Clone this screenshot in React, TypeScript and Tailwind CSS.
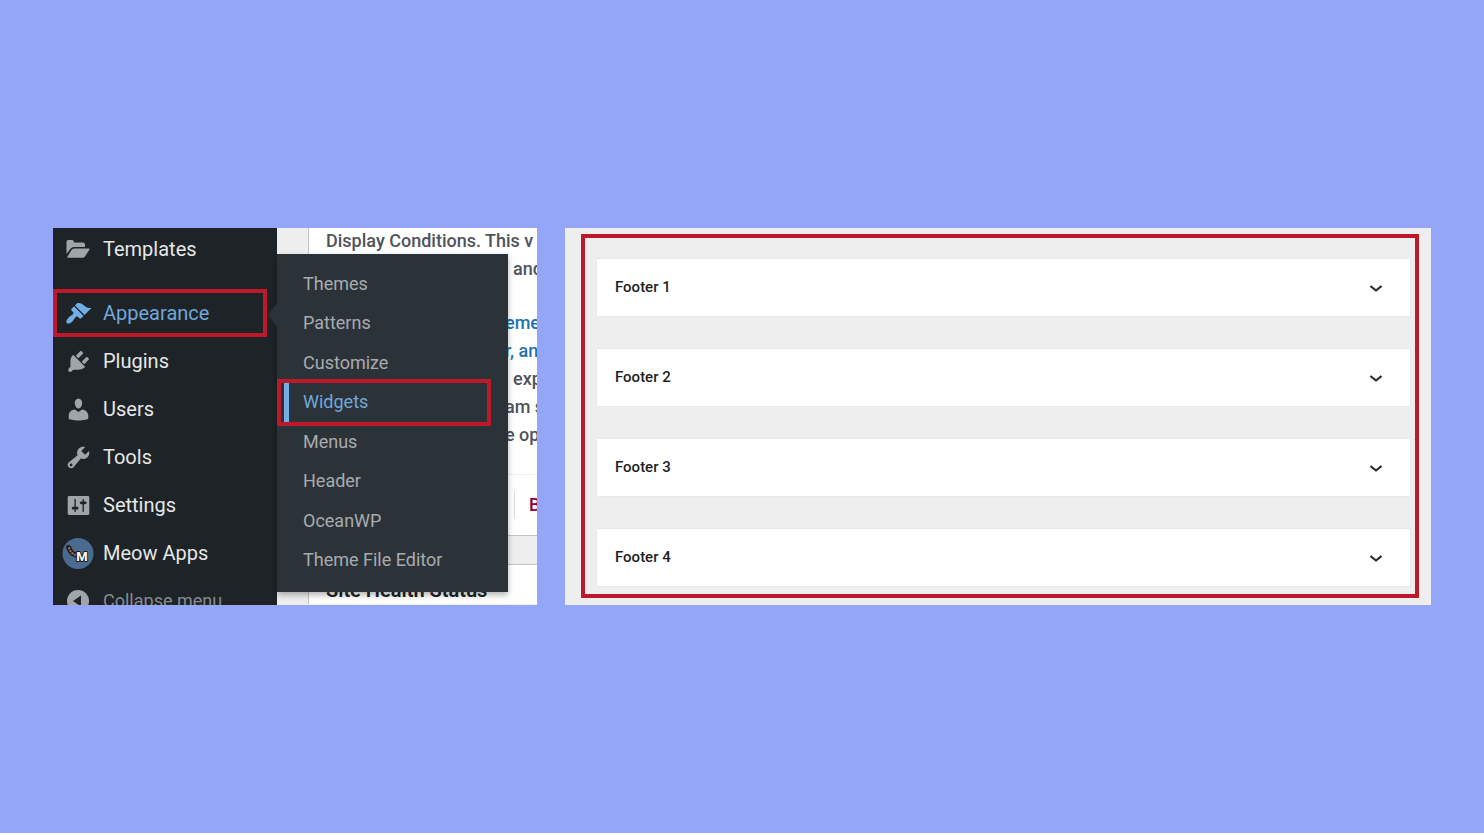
import { clsx } from "clsx";

function DashIcon({ d }: { d: string }) {
  return (
    <svg viewBox="0 0 20 20" className="h-[27px] w-[27px]" fill="currentColor" fillRule="evenodd" aria-hidden="true">
      <path d={d} />
    </svg>
  );
}

function FolderIcon() {
  return (
    <svg viewBox="0 0 24 20" className="h-5 w-6" fill="currentColor" aria-hidden="true">
      <path d="M.5 15V3Q.5 1 2.500 1H6Q8 1 8 3v.5h9q2 0 2 2V8H8Q5.800 8 4.500 9.700z" />
      <path d="M8.300 9.500H23q1 0 .5 1l-4.300 6.700q-1 1.600-3 1.600H2q-1.200 0-.6-1.100l4-6.500q1-1.700 2.900-1.700z" />
    </svg>
  );
}

function MeowIcon() {
  return (
    <svg viewBox="0 0 32 32" className="h-8 w-8" aria-hidden="true">
      <circle cx="16" cy="16.500" r="15.500" fill="#4a6b8f" />
      <path d="M6.500 10.500c1.500 1.500 1.500 4 3.500 5.500s3 1.500 5 2.500" fill="none" stroke="#1f1b1d" strokeWidth="5" strokeLinecap="round" />
      <path d="M6.500 10.500c1.500 1.500 1.500 4 3.500 5.500s3 1.500 5 2.500" fill="none" stroke="#a87858" strokeWidth="2" strokeDasharray="2 1" />
      <text
        x="20"
        y="23.500"
        textAnchor="middle"
        fontFamily="Roboto, sans-serif"
        fontWeight="700"
        fontSize="13"
        fill="#fff"
        stroke="#1f1b1d"
        strokeWidth="2"
        strokeLinejoin="round"
        paintOrder="stroke"
      >
        M
      </text>
    </svg>
  );
}

function CollapseIcon() {
  return (
    <svg viewBox="0 0 22 22" className="h-[22px] w-[22px]" aria-hidden="true">
      <circle cx="11" cy="11" r="11" fill="currentColor" />
      <path d="M14 5.500v11L6 11z" fill="#1d2327" />
    </svg>
  );
}

const menuItems = [
  {
    label: "Appearance",
    active: true,
    icon: (
      <DashIcon d="M14.48 11.06L7.41 3.99l1.5-1.5c.5-.56 2.3-.47 3.51.32 1.21.8 1.43 1.28 2.91 2.1 1.18.64 2.45 1.26 4.45.85zm-.71.71L6.7 4.7 4.93 6.47c-.39.39-.39 1.02 0 1.41l1.06 1.06c.39.39.39 1.03 0 1.42-.6.6-1.43 1.11-2.21 1.69-.35.26-.7.53-1.01.84C1.43 14.23.4 16.08 1.4 17.07c.99 1 2.84-.03 4.18-1.36.31-.31.58-.66.85-1.02.57-.78 1.08-1.61 1.69-2.21.39-.39 1.02-.39 1.41 0l1.06 1.06c.39.39 1.02.39 1.41 0z" />
    ),
  },
  {
    label: "Plugins",
    icon: (
      <DashIcon d="M13.11 4.36L9.87 7.6 8 5.73l3.24-3.24c.35-.34 1.05-.2 1.56.32.52.51.66 1.21.31 1.55zm-8 1.77l.91-1.12 9.01 9.01-1.19.84c-.71.71-2.63 1.16-3.82 1.16H6.14L4.9 17.26c-.59.59-1.54.59-2.12 0-.59-.58-.59-1.53 0-2.12l1.24-1.24v-3.88c0-1.13.4-3.19 1.09-3.89zm7.26 3.97l3.24-3.24c.34-.35 1.04-.21 1.55.31.52.51.66 1.21.31 1.55l-3.24 3.25z" />
    ),
  },
  {
    label: "Users",
    icon: (
      <DashIcon d="M10 9.25c-2.27 0-2.73-3.44-2.73-3.44C7 4.02 7.82 2 9.97 2c2.16 0 2.98 2.02 2.71 3.81 0 0-.41 3.44-2.68 3.44zm0 2.57L12.72 10c2.39 0 4.52 2.33 4.52 4.53v2.49s-3.65 1.13-7.24 1.13c-3.65 0-7.24-1.13-7.24-1.13v-2.49c0-2.25 1.94-4.48 4.47-4.48z" />
    ),
  },
  {
    label: "Tools",
    icon: (
      <DashIcon d="M16.68 9.77c-1.34 1.34-3.3 1.67-4.95.99l-5.41 6.52c-.99.99-2.59.99-3.58 0s-.99-2.59 0-3.57l6.52-5.42c-.68-1.65-.35-3.61.99-4.95 1.28-1.28 3.12-1.62 4.72-1.06l-2.89 2.89 2.82 2.82 2.86-2.87c.53 1.58.18 3.39-1.08 4.65zM3.81 16.21c.4.39 1.04.39 1.43 0 .4-.4.4-1.04 0-1.43-.39-.4-1.03-.4-1.43 0-.39.39-.39 1.03 0 1.43z" />
    ),
  },
  {
    label: "Settings",
    icon: (
      <DashIcon d="M18 16V4c0-.55-.45-1-1-1H3c-.55 0-1 .45-1 1v12c0 .55.45 1 1 1h14c.55 0 1-.45 1-1zM8 11h1c.55 0 1 .45 1 1s-.45 1-1 1H8v1.5c0 .28-.22.5-.5.5s-.5-.22-.5-.5V13H6c-.55 0-1-.45-1-1s.45-1 1-1h1V5.500c0-.28.22-.5.5-.5s.5.22.5.5V11zm5-2h-1c-.55 0-1-.45-1-1s.45-1 1-1h1V5.500c0-.28.22-.5.5-.5s.5.22.5.5V7h1c.55 0 1 .45 1 1s-.45 1-1 1h-1v5.500c0 .28-.22.5-.5.5s-.5-.22-.5-.5V9z" />
    ),
  },
  { label: "Meow Apps", icon: <MeowIcon /> },
];

const submenu = ["Themes", "Patterns", "Customize", "Widgets", "Menus", "Header", "OceanWP", "Theme File Editor"];

const footers = ["Footer 1", "Footer 2", "Footer 3", "Footer 4"];

function MenuLink({ label, icon, active }: { label: string; icon: React.ReactNode; active?: boolean }) {
  return (
    <a
      href="#"
      className={clsx(
        "mr-[10px] flex h-12 items-center gap-[9px] pl-[9px]",
        active ? "text-[#72aee6] ring-4 ring-[#be182b] ring-inset" : "text-[#a0a5aa]"
      )}
    >
      <span className="flex w-8 shrink-0 justify-center">{icon}</span>
      <span className={active ? "text-[#6fa8dc]" : "text-[#e6e7e8]"}>{label}</span>
    </a>
  );
}

function Sidebar() {
  return (
    <nav className="w-[224px] shrink-0 bg-[#1d2327] text-xl">
      <div className="-mt-[3px] mb-4">
        <MenuLink label="Templates" icon={<FolderIcon />} />
      </div>
      {menuItems.map((item) => (
        <MenuLink key={item.label} {...item} />
      ))}
      <button className="flex h-12 items-center gap-[9px] pl-[9px] text-lg text-[#a0a5aa]">
        <span className="flex w-8 justify-center">
          <CollapseIcon />
        </span>
        <span className="text-[#878c91]">Collapse menu</span>
      </button>
    </nav>
  );
}

function Submenu() {
  return (
    <div className="absolute top-[26px] left-[224px] w-[231px] bg-[#2c3338] shadow-[0_3px_6px_rgba(0,0,0,0.3)]">
      <span className="absolute top-[49px] -left-[9px] border-y-12 border-r-9 border-y-transparent border-r-[#2c3338]" />
      <ul className="grid h-[338px] grid-rows-8 pt-[10px] pb-3 text-lg">
        {submenu.map((label) => (
          <li key={label} className="relative flex">
            {label === "Widgets" ? (
              <>
                <a href="#" className="ml-[7px] flex flex-1 items-center border-l-5 border-[#72aee6] pl-[14px] text-[#6fa8dc]">
                  {label}
                </a>
                <span className="pointer-events-none absolute -inset-y-1 right-[17px] left-0 border-4 border-[#be182b]" />
              </>
            ) : (
              <a href="#" className="flex flex-1 items-center pl-[26px] text-[#a7abaf]">
                {label}
              </a>
            )}
          </li>
        ))}
      </ul>
    </div>
  );
}

function Dashboard() {
  return (
    <div className="min-w-0 flex-1 bg-[#eeeeee] pl-[31px] whitespace-nowrap">
      <section className="h-[309px] border-b border-l border-[#c3c4c7] bg-white text-lg leading-7 font-medium text-[#50545a]">
        <p className="-mt-[1px] pl-[17px]">Display Conditions. This v</p>
        <div className="flex h-[219px] flex-col pl-[196px]">
          <p className="pl-2">and</p>
          <a href="#" className="mt-[26px] text-[#2271b1]">
            eme
            <br />
            r, an
          </a>
          <p className="pl-2">exp</p>
          <p>am s</p>
          <p>e op</p>
        </div>
        <div className="flex border-t border-[#eeeeee] pt-4 pl-[205px]">
          <a href="#" className="border-l border-[#dddddd] pl-[14px] text-[#93003f]">
            B
          </a>
        </div>
      </section>
      <section className="mt-7 h-10 border-t border-l border-[#c3c4c7] bg-white pt-[11px] pl-[17px]">
        <h2 className="text-xl font-semibold text-[#1d2327]">Site Health Status</h2>
      </section>
    </div>
  );
}

function FooterAreas() {
  return (
    <section className="min-w-0 flex-1 bg-[#eeeeee] pt-[6px] pr-3 pb-[7px] pl-4">
      <div className="flex flex-col gap-[33px] border-4 border-[#be182b] pt-[21px] pr-[5px] pb-2 pl-3">
        {footers.map((label) => (
          <button
            key={label}
            className="flex h-[57px] items-center justify-between bg-white pr-[21px] pl-[18px] text-[15px] font-medium text-[#1e1e1e] shadow-[0_0_1px_rgba(0,0,0,0.12)]"
          >
            {label}
            <svg
              viewBox="0 0 24 24"
              className="h-[26px] w-[26px]"
              fill="currentColor"
              stroke="currentColor"
              strokeWidth="0.4"
              aria-hidden="true"
            >
              <path d="M17.500 10.900L12 15.300l-5.500-4.400.9-1.200L12 13.300l4.500-3.600 1 1.200z" />
            </svg>
          </button>
        ))}
      </div>
    </section>
  );
}

export default function App() {
  return (
    <main className="flex min-h-screen items-center gap-7 border-b-2 border-white bg-[#94a6f7] px-[53px] font-[Roboto,sans-serif]">
      <div className="relative flex h-[377px] w-[484px] shrink-0 overflow-hidden">
        <Sidebar />
        <Dashboard />
        <Submenu />
      </div>
      <FooterAreas />
    </main>
  );
}
